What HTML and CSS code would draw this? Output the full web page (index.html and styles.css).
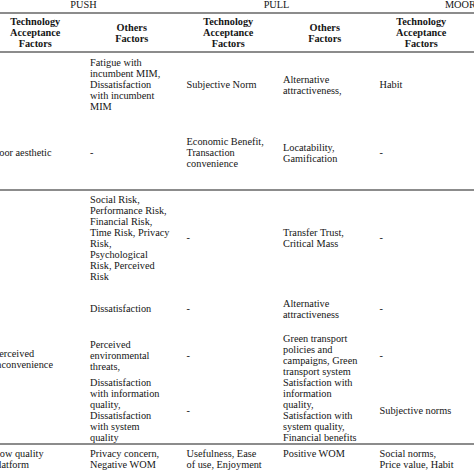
FILE: index.html
```html
<!DOCTYPE html>
<html>
<head>
<meta charset="utf-8">
<link rel="stylesheet" href="styles.css">
</head>
<body>
<table class="grid">
  <colgroup>
    <col class="c"><col class="c"><col class="c"><col class="c"><col class="c"><col class="c">
  </colgroup>
  <tr class="groups">
    <th colspan="2">PUSH</th>
    <th colspan="2">PULL</th>
    <th colspan="2">MOORING</th>
  </tr>
  <tr class="head">
    <th>Technology<br>Acceptance<br>Factors</th>
    <th>Others<br>Factors</th>
    <th>Technology<br>Acceptance<br>Factors</th>
    <th>Others<br>Factors</th>
    <th>Technology<br>Acceptance<br>Factors</th>
    <th>Others<br>Factors</th>
  </tr>
  <tr class="r1">
    <td></td>
    <td>Fatigue with<br>incumbent MIM,<br>Dissatisfaction<br>with incumbent<br>MIM</td>
    <td>Subjective Norm</td>
    <td>Alternative<br>attractiveness,</td>
    <td>Habit</td>
    <td></td>
  </tr>
  <tr class="r2 rule">
    <td>Poor aesthetic</td>
    <td>-</td>
    <td>Economic Benefit,<br>Transaction<br>convenience</td>
    <td>Locatability,<br>Gamification</td>
    <td>-</td>
    <td></td>
  </tr>
  <tr class="r3">
    <td></td>
    <td>Social Risk,<br>Performance Risk,<br>Financial Risk,<br>Time Risk, Privacy<br>Risk,<br>Psychological<br>Risk, Perceived<br>Risk</td>
    <td>-</td>
    <td>Transfer Trust,<br>Critical Mass</td>
    <td>-</td>
    <td></td>
  </tr>
  <tr class="r4">
    <td></td>
    <td>Dissatisfaction</td>
    <td>-</td>
    <td>Alternative<br>attractiveness</td>
    <td>-</td>
    <td></td>
  </tr>
  <tr class="r5">
    <td class="low">Perceived<br>inconvenience</td>
    <td>Perceived<br>environmental<br>threats,</td>
    <td>-</td>
    <td>Green transport<br>policies and<br>campaigns, Green<br>transport system</td>
    <td>-</td>
    <td></td>
  </tr>
  <tr class="r6 rule">
    <td></td>
    <td>Dissatisfaction<br>with information<br>quality,<br>Dissatisfaction<br>with system<br>quality</td>
    <td>-</td>
    <td>Satisfaction with<br>information<br>quality,<br>Satisfaction with<br>system quality,<br>Financial benefits</td>
    <td>Subjective norms</td>
    <td></td>
  </tr>
  <tr class="r7">
    <td>Low quality<br>platform</td>
    <td>Privacy concern,<br>Negative WOM</td>
    <td>Usefulness, Ease<br>of use, Enjoyment</td>
    <td>Positive WOM</td>
    <td>Social norms,<br>Price value, Habit</td>
    <td></td>
  </tr>
</table>
</body>
</html>
```

FILE: styles.css
```css
html, body {
  margin: 0;
  padding: 0;
  background: #ffffff;
  overflow: hidden;
  width: 474px;
  height: 474px;
}

.grid {
  margin-left: -13px;
  margin-top: -1px;
  width: 579px;
  table-layout: fixed;
  border-collapse: collapse;
  border-spacing: 0;
  font-family: "Liberation Serif", "Times New Roman", serif;
  font-size: 10.3px;
  line-height: 11px;
  color: #151515;
}

.c {
  width: 96.5px;
}

.grid th,
.grid td {
  padding: 0;
  white-space: nowrap;
  overflow: hidden;
}

.grid td {
  text-align: left;
  vertical-align: middle;
  padding-left: 6.5px;
}

.groups th {
  font-weight: normal;
  text-align: center;
  height: 13px;
  vertical-align: top;
  border-bottom: 2px solid #8c8c8c;
}

.head th {
  font-weight: bold;
  text-align: center;
  vertical-align: middle;
  height: 37px;
  border-bottom: 2px solid #8c8c8c;
}

.r1 td { height: 63px; }
.r2 td { height: 73px; }
.r3 td { height: 93px; }
.r4 td { height: 49px; }
.r5 td { height: 44px; }
.r6 td { height: 66px; }
.r7 td { height: 27px; vertical-align: top; padding-top: 3px; }

.rule td {
  border-bottom: 2px solid #8c8c8c;
}

.grid .r5 td.low {
  padding-top: 8px;
  height: 36px;
}
```
